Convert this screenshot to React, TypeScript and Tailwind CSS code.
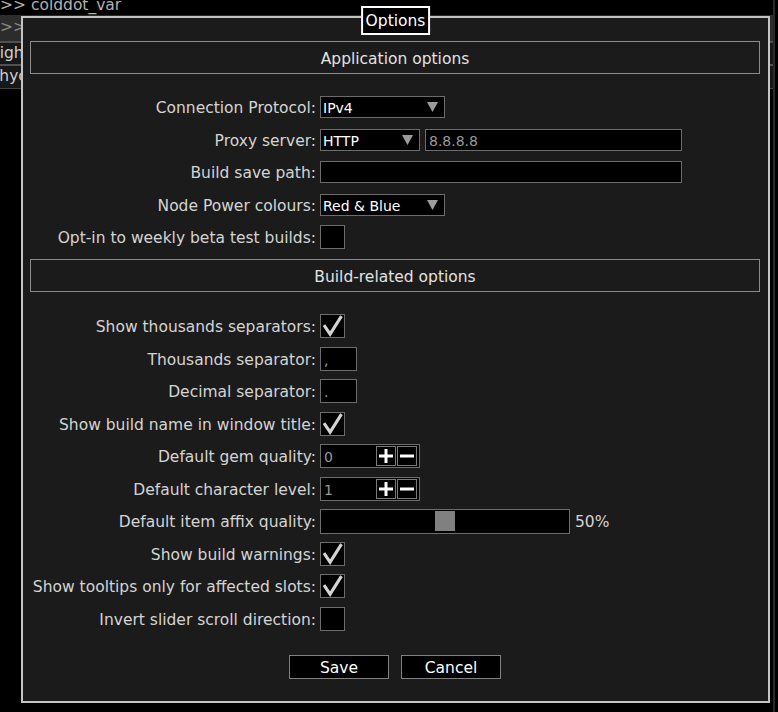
import React from "react";

const Check = () => (
  <svg width="24" height="24" viewBox="0 0 24 24" className="block">
    <path d="M4 12.5 L9.5 20.5 L20.5 3" fill="none" stroke="#d4d4d4" strokeWidth="3.2" strokeLinecap="square" strokeLinejoin="miter" />
  </svg>
);

const Arrow = () => (
  <svg width="11" height="10" viewBox="0 0 11 10" className="block">
    <polygon points="0,0 11,0 5.5,10" fill="#9c9c9c" />
  </svg>
);

const Plus = () => (
  <svg width="14" height="14" viewBox="0 0 14 14" className="block">
    <rect x="0" y="5.5" width="14" height="3" fill="#ffffff" />
    <rect x="5.5" y="0" width="3" height="14" fill="#ffffff" />
  </svg>
);

const Minus = () => (
  <svg width="14" height="14" viewBox="0 0 14 14" className="block">
    <rect x="0" y="5.5" width="14" height="3" fill="#ffffff" />
  </svg>
);

function Row({ label, children }: { label: string; children?: React.ReactNode }) {
  return (
    <div className="flex items-center h-[32.5px]">
      <div className="w-[286px] shrink-0 text-right text-[#d4d4d4] whitespace-nowrap translate-y-[1.5px]">{label}</div>
      <div className="ml-[4px] flex items-center">{children}</div>
    </div>
  );
}

function Dropdown({ value, w }: { value: string; w: string }) {
  return (
    <div className={`${w} h-[22px] bg-black border border-[#6c6c6c] flex items-center justify-between pl-[2px] pr-[6px] text-[14px] text-white`}>
      <span className="translate-y-[1px]">{value}</span>
      <Arrow />
    </div>
  );
}

function CheckBox({ checked }: { checked?: boolean }) {
  return (
    <div className="w-[25px] h-[24px] bg-black border border-[#6c6c6c] flex items-center justify-center">
      {checked ? <Check /> : null}
    </div>
  );
}

function Spin({ value }: { value: string }) {
  return (
    <div className="w-[100px] h-[24px] bg-black border border-[#6c6c6c] flex items-center pl-[3px] pr-[2px] text-[14px] text-[#9a9a9a]">
      <span className="translate-y-[1px]">{value}</span>
      <div className="ml-auto flex gap-[1px]">
        <div className="w-[20px] h-[20px] bg-black border border-[#7a7a7a] flex items-center justify-center">
          <Plus />
        </div>
        <div className="w-[20px] h-[20px] bg-black border border-[#7a7a7a] flex items-center justify-center">
          <Minus />
        </div>
      </div>
    </div>
  );
}

function Header({ title }: { title: string }) {
  return (
    <div className="h-[33px] border border-[#8a8a8a] flex items-center justify-center text-[#e2e2e2]">
      <span className="translate-y-[1.5px]">{title}</span>
    </div>
  );
}

export default function App() {
  return (
    <div className="relative w-[778px] h-[712px] bg-black overflow-hidden text-[15.5px] leading-none font-['DejaVu_Sans',sans-serif]">
      {/* background app */}
      <div className="flex h-full">
        <div className="w-[773px] flex flex-col">
          <div className="h-[15px] overflow-hidden">
            <div className="-mt-[4px] leading-[18px] text-[#b0b0b0] whitespace-nowrap">&gt;&gt; colddot_var</div>
          </div>
          <div className="h-[26px] bg-[#2c2c2c] flex items-center text-[#8a8a8a] whitespace-nowrap">&gt;&gt;</div>
          <div className="h-[2px] bg-[#505050]" />
          <div className="h-[21px] bg-[#181818] flex items-center text-[#cfcfcf] whitespace-nowrap overflow-hidden">
            <span className="-ml-[12px]">Highlight</span>
          </div>
          <div className="h-[2px] bg-[#505050]" />
          <div className="h-[22px] bg-[#181818] flex items-center text-[#cfcfcf] whitespace-nowrap overflow-hidden">
            <span className="-ml-[10px]">Phycology</span>
          </div>
          <div className="h-[1px] bg-[#404040]" />
        </div>
        <div className="w-[2px] bg-[#2a2a2a]" />
      </div>

      {/* dialog */}
      <div className="absolute left-[21px] top-[16px] w-[749px] h-[687px] border-2 border-[#c4c4c4] bg-[#1b1b1b]">
        <div className="absolute left-1/2 -translate-x-1/2 top-[-12px] h-[29px] px-[3px] border-2 border-white bg-black flex items-center text-white">
          <span className="translate-y-[1px]">Options</span>
        </div>
        <div className="pl-[7px] pr-[8px] pt-[23px] flex flex-col">
          <Header title="Application options" />
          <div className="mt-[16.75px] flex flex-col">
            <Row label="Connection Protocol:">
              <Dropdown value="IPv4" w="w-[125px]" />
            </Row>
            <Row label="Proxy server:">
              <Dropdown value="HTTP" w="w-[100px]" />
              <div className="ml-[5px] w-[257px] h-[22px] bg-black border border-[#6c6c6c] flex items-center pl-[3px] text-[14px] text-[#9a9a9a]">
                <span className="translate-y-[1px]">8.8.8.8</span>
              </div>
            </Row>
            <Row label="Build save path:">
              <div className="w-[362px] h-[22px] bg-black border border-[#6c6c6c]" />
            </Row>
            <Row label="Node Power colours:">
              <Dropdown value="Red & Blue" w="w-[125px]" />
            </Row>
            <Row label="Opt-in to weekly beta test builds:">
              <CheckBox />
            </Row>
          </div>
          <div className="mt-[5.75px]">
            <Header title="Build-related options" />
          </div>
          <div className="mt-[17.75px] flex flex-col">
            <Row label="Show thousands separators:">
              <CheckBox checked />
            </Row>
            <Row label="Thousands separator:">
              <div className="w-[37px] h-[24px] bg-black border border-[#6c6c6c] flex items-center pl-[3px] text-[14px] text-[#9a9a9a]">
                <span className="translate-y-[1px]">,</span>
              </div>
            </Row>
            <Row label="Decimal separator:">
              <div className="w-[37px] h-[24px] bg-black border border-[#6c6c6c] flex items-center pl-[3px] text-[14px] text-[#9a9a9a]">
                <span className="translate-y-[1px]">.</span>
              </div>
            </Row>
            <Row label="Show build name in window title:">
              <CheckBox checked />
            </Row>
            <Row label="Default gem quality:">
              <Spin value="0" />
            </Row>
            <Row label="Default character level:">
              <Spin value="1" />
            </Row>
            <Row label="Default item affix quality:">
              <div className="w-[250px] h-[25px] bg-black border border-[#6c6c6c] flex items-center justify-center">
                <div className="w-[20px] h-[20px] bg-[#808080]" />
              </div>
              <span className="ml-[5px] text-[#d4d4d4] translate-y-[1.5px]">50%</span>
            </Row>
            <Row label="Show build warnings:">
              <CheckBox checked />
            </Row>
            <Row label="Show tooltips only for affected slots:">
              <CheckBox checked />
            </Row>
            <Row label="Invert slider scroll direction:">
              <CheckBox />
            </Row>
          </div>
          <div className="mt-[20px] flex justify-center gap-[12px]">
            <div className="w-[100px] h-[24px] bg-black border border-[#808080] flex items-center justify-center text-white">
              <span className="translate-y-[1.5px]">Save</span>
            </div>
            <div className="w-[100px] h-[24px] bg-black border border-[#808080] flex items-center justify-center text-white">
              <span className="translate-y-[1.5px]">Cancel</span>
            </div>
          </div>
        </div>
      </div>
    </div>
  );
}
